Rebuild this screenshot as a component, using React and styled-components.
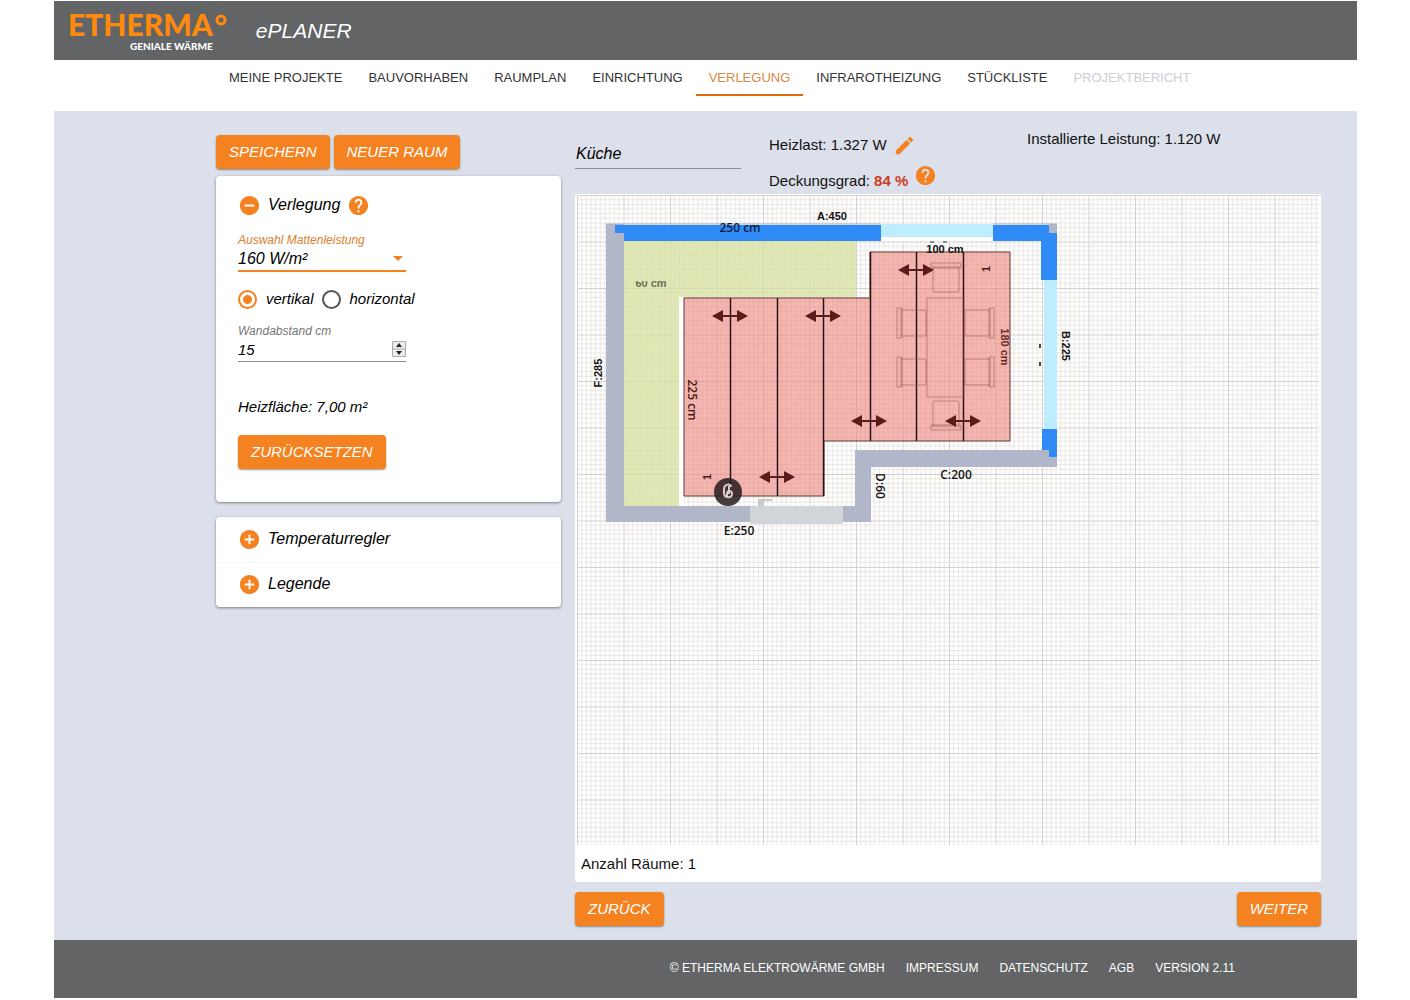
import { useState } from 'react'
import styled, { createGlobalStyle, css } from 'styled-components'
import { MdAddCircle, MdEdit, MdHelp, MdRemoveCircle } from 'react-icons/md'

const orange = '#f58220'
const grey = '#626466'

const GlobalStyle = createGlobalStyle`
  * {
    box-sizing: border-box;
  }
  body {
    margin: 0;
    background: #fff;
    color: #111;
    font-family: 'Liberation Sans', Arial, sans-serif;
    font-size: 15px;
  }
`

const brandFont = css`
  font-family: 'Liberation Sans', Arial, sans-serif;
  font-style: italic;
  font-weight: 400;
`

const Page = styled.div`
  margin: 1px 53px 0 54px;
`

const Header = styled.header`
  display: flex;
  align-items: flex-start;
  gap: 28px;
  height: 59px;
  padding: 8px 14px;
  background: ${grey};
  color: #fff;
`

const Logo = styled.a`
  display: grid;
  grid-template-columns: auto 14px;
  column-gap: 1px;
  color: #ff8a0c;
  text-decoration: none;
  font-family: Lato, sans-serif;
  font-weight: 900;
`

const LogoName = styled.span`
  font-size: 30px;
  line-height: 31px;
`

const LogoRing = styled.svg`
  width: 14px;
  height: 14px;
  margin-top: 4px;
`

const LogoClaim = styled.span`
  color: #fff;
  font-size: 10px;
  line-height: 12px;
  text-align: right;
`

const AppName = styled.h1`
  ${brandFont}
  margin: 10px 0 0;
  font-size: 21px;
  line-height: 24px;
`

const Nav = styled.nav`
  display: flex;
  height: 51px;
  padding: 0 162px;
`

const NavLink = styled.a`
  height: 36px;
  padding: 9px 13px 0;
  border-bottom: 2px solid ${p => p.$active ? '#e06c10' : 'transparent'};
  color: ${p => p.$active ? '#d98a45' : p.$disabled ? '#ccced6' : '#333'};
  font-size: 13px;
  line-height: 18px;
  text-decoration: none;
  white-space: nowrap;
`

const Main = styled.main`
  display: grid;
  grid-template-columns: 345px minmax(0, 1fr);
  gap: 14px;
  padding: 0 36px 14px 162px;
  background: #dce0ea;
`

const Sidebar = styled.aside`
  padding-top: 24px;
`

const ButtonRow = styled.div`
  display: flex;
  justify-content: ${p => p.$spread ? 'space-between' : 'flex-start'};
  gap: 4px;
`

const Button = styled.button`
  ${brandFont}
  height: 34px;
  padding: 0 13px 2px;
  border: 0;
  border-radius: 4px;
  background: ${orange};
  box-shadow: 0 1px 2px rgba(0, 0, 0, .4);
  color: #fff;
  font-size: 15px;
  white-space: nowrap;
  cursor: pointer;
`

const Card = styled.section`
  ${brandFont}
  margin-top: ${p => p.$gap}px;
  border-radius: 4px;
  background: #fff;
  box-shadow: 0 1px 3px rgba(0, 0, 0, .45);
  color: #000;
`

const Settings = styled.div`
  padding: 17px 22px 33px;
`

const PanelTitle = styled.h2`
  display: flex;
  align-items: center;
  gap: 7px;
  margin: 0;
  font-size: 16px;
  font-weight: 400;
  line-height: 24px;
`

const IconButton = styled.button`
  display: flex;
  padding: 0;
  border: 0;
  background: none;
  color: ${orange};
  cursor: pointer;
`

const PanelToggle = styled.button`
  ${brandFont}
  display: flex;
  align-items: center;
  gap: 7px;
  width: 100%;
  height: 45px;
  padding: 0 22px 2px;
  border: 0;
  border-top: 1px solid ${p => p.$divided ? '#f4f4f4' : 'transparent'};
  background: none;
  color: #000;
  font-size: 16px;
  cursor: pointer;
  svg {
    color: ${orange};
  }
`

const Field = styled.div`
  position: relative;
  width: 168px;
  margin-top: ${p => p.$gap}px;
  border-bottom: ${p => p.$active ? `2px solid ${orange}` : '1px solid #8c8c8c'};
`

const FieldLabel = styled.label`
  display: block;
  color: ${p => p.$active ? '#d9802f' : '#777'};
  font-size: 12px;
  line-height: 14px;
`

const inputStyle = css`
  ${brandFont}
  display: block;
  width: 100%;
  height: 23px;
  padding: 0;
  border: 0;
  outline: 0;
  background: none;
  color: #000;
  font-size: 16px;
  appearance: none;
`

const Select = styled.select`
  ${inputStyle}
`

const NumberInput = styled.input`
  ${inputStyle}
  font-size: 15px;
  appearance: textfield;
  &::-webkit-inner-spin-button {
    display: none;
  }
`

const Caret = styled.svg`
  position: absolute;
  right: 3px;
  bottom: 9px;
  width: 10px;
  height: 5px;
  pointer-events: none;
`

const Spinner = styled.svg`
  position: absolute;
  right: 0;
  bottom: 4px;
  width: 14px;
  height: 16px;
`

const RadioRow = styled.div`
  display: flex;
  align-items: center;
  gap: 8px;
  margin-top: 17px;
  font-size: 15px;
  line-height: 20px;
`

const RadioLabel = styled.label`
  display: flex;
  align-items: center;
  gap: 9px;
`

const Radio = styled.input`
  width: 19px;
  height: 19px;
  margin: 0;
  border: 2px solid #555;
  border-radius: 50%;
  appearance: none;
  &:checked {
    border-color: ${orange};
    background: radial-gradient(circle, ${orange} 4px, transparent 5px);
  }
`

const HeatArea = styled.p`
  margin: 35px 0 18px;
  font-size: 15px;
  line-height: 20px;
`

const Workspace = styled.section`
  min-width: 0;
`

const RoomHead = styled.div`
  display: grid;
  grid-template-columns: 166px 230px auto;
  column-gap: 28px;
  height: 83px;
`

const RoomName = styled.input`
  ${inputStyle}
  height: 29px;
  margin-top: 29px;
  padding: 0 1px;
  border-bottom: 1px solid #8a8d94;
`

const Stats = styled.div`
  padding-top: 22px;
`

const Stat = styled.div`
  display: flex;
  align-items: flex-end;
  gap: 6px;
  line-height: 24px;
`

const Coverage = styled(Stat)`
  align-items: flex-start;
  margin-top: 7px;
  line-height: 34px;
`

const Percent = styled.strong`
  color: #cf3a20;
`

const Installed = styled.div`
  padding-top: 16px;
  line-height: 24px;
`

const PlanCard = styled.div`
  padding: 1px 2px 0;
  border-radius: 2px;
  background: #fff;
`

const Plan = styled.svg`
  display: block;
  width: 100%;
  height: 650px;
`

const RoomCount = styled.p`
  margin: 0 0 10px;
  padding: 0 4px;
  line-height: 37px;
`

const Footer = styled.footer`
  display: flex;
  justify-content: flex-end;
  align-items: center;
  gap: 21px;
  height: 58px;
  padding: 0 122px 3px 0;
  background: ${grey};
  color: #fff;
  font-size: 12px;
  a {
    color: #fff;
    text-decoration: none;
  }
`

const PlanText = styled.text`
  font-family: ${p => p.$soft ? "'Open Sans'" : "'Liberation Sans'"}, sans-serif;
  font-size: ${p => p.$soft ? 12 : 11}px;
  font-weight: ${p => p.$soft ? 600 : 700};
  text-anchor: middle;
  dominant-baseline: central;
`

const tabs = [
  { label: 'MEINE PROJEKTE' },
  { label: 'BAUVORHABEN' },
  { label: 'RAUMPLAN' },
  { label: 'EINRICHTUNG' },
  { label: 'VERLEGUNG', active: true },
  { label: 'INFRAROTHEIZUNG' },
  { label: 'STÜCKLISTE' },
  { label: 'PROJEKTBERICHT', disabled: true }
]

const footerLinks = ['IMPRESSUM', 'DATENSCHUTZ', 'AGB']

const arrows = [[153, 121], [246, 121], [200, 282], [339, 75], [292, 226], [386, 226]]

// seat x, seat y, rotation of the chair around its seat
const chairs = [[369, 84, 0], [336, 128, -90], [336, 177, -90], [401, 128, 90], [401, 177, 90], [369, 219, 180]]

const labels = [
  { text: '250 cm', x: 163, y: 32, soft: true, color: '#0b1c3c' },
  { text: 'A:450', x: 255, y: 21 },
  { text: '100 cm', x: 368, y: 54 },
  { text: 'C:200', x: 379, y: 279, soft: true },
  { text: 'E:250', x: 162, y: 335, soft: true },
  { text: 'B:225', x: 489, y: 151, turn: 90 },
  { text: 'D:60', x: 303, y: 291, turn: 90, soft: true },
  { text: 'F:285', x: 21, y: 178, turn: -90 },
  { text: '225 cm', x: 115, y: 205, turn: 90, soft: true, color: '#4a1815' },
  { text: '180 cm', x: 428, y: 152, turn: 90, color: '#6b2a26' },
  { text: '1', x: 130, y: 282, turn: -90, color: '#4a1815' },
  { text: '1', x: 409, y: 74, turn: -90, color: '#4a1815' }
]

function Grid () {
  const lines = [1, 2, 3, 4, 5, 6, 7, 8, 9].map(n => n * 4.65)
  return (
    <>
      <defs>
        <pattern id='grid' width='46.5' height='46.5' patternUnits='userSpaceOnUse'>
          {lines.map(n => <path key={n} d={`M${n} 0V46.5M0 ${n}H46.5`} stroke='#e9e5e2' />)}
          <path d='M.5 0V46.5M0 .5H46.5' stroke='#d4d1d1' />
        </pattern>
      </defs>
      <rect width='100%' height='100%' fill='url(#grid)' />
    </>
  )
}

function Walls () {
  return (
    <>
      <path d='M47 46H279V102H102V311H47Z' fill='#d5df9b' fillOpacity='.72' />
      <path d='M102 102H107V311H102Z' fill='#fff' />
      <path d='M29 29H47V311H278V255H480V272H294V327H29Z' fill='#b1b7c9' />
      <path d='M173 311H266V329H173Z' fill='#d0d5da' />
      <path d='M181 311V304H195V306H187V311Z' fill='#c6cbd0' />
      <path d='M38 30H304V46H47V38H38Z' fill='#2f8af5' />
      <path d='M304 42H416V46H304Z' fill='#fff' />
      <path d='M304 29H416V42H304Z' fill='#bdedff' />
      <path d='M416 30H480V85H464V46H416Z' fill='#2f8af5' />
      <path d='M472 29H480V38H472Z' fill='#b1b7c9' />
      <path d='M467 85H480V234H467Z' fill='#bdedff' />
      <path d='M465 234H480V262H472V255H465Z' fill='#2f8af5' />
      <path d='M29 29H304M416 29H480' stroke='#a3adc2' />
      <path d='M463 149V153M463 167V171' stroke='#444' strokeWidth='2' />
    </>
  )
}

function Mats () {
  return (
    <>
      <path
        d='M107 103H293V57H433V246H247V301H107Z'
        fill='#ee7f76' fillOpacity='.56' stroke='#5e3b3b'
      />
      <path
        d='M153.500 103V301M200.500 103V301M246.500 103V301M293.500 57V246M339.500 57V246M386.500 57V246'
        stroke='#2c1414' strokeWidth='1.500'
      />
      <g fill='none' stroke='#9b5352' strokeOpacity='.55'>
        <rect x='350' y='103' width='37' height='99' />
        {chairs.map(([x, y, turn]) => (
          <g key={`${x}-${y}`} transform={`translate(${x} ${y}) rotate(${turn})`}>
            <rect x='-13' y='-11' width='26' height='24' rx='1' />
            <rect x='-15' y='-16' width='30' height='4' />
            <path d='M-15-11H-12M12-11H15' />
          </g>
        ))}
      </g>
      {arrows.map(([x, y]) => (
        <path
          key={`${x}-${y}`}
          transform={`translate(${x} ${y})`}
          d='M-18 0L-7-6V-1H7V-6L18 0L7 6V1H-7V6Z'
          fill='#5b1b1a'
        />
      ))}
    </>
  )
}

function FloorPlan () {
  return (
    <Plan role='img' aria-label='Raumplan Küche'>
      <Grid />
      <Walls />
      <Mats />
      <clipPath id='lower'>
        <rect x='50' y='86' width='50' height='12' />
      </clipPath>
      <g clipPath='url(#lower)'>
        <PlanText x={74} y={88} fill='#6c7057'>60 cm</PlanText>
      </g>
      {labels.map(l => (
        <PlanText
          key={`${l.text}-${l.x}`}
          $soft={l.soft}
          fill={l.color || '#111'}
          transform={`translate(${l.x} ${l.y}) rotate(${l.turn || 0})`}
        >
          {l.text}
        </PlanText>
      ))}
      <path d='M353 47H357M366 47H370' stroke='#333' />
      <circle cx='151' cy='297' r='14' fill='#2b2022' fillOpacity='.88' />
      <path
        d='M154 292C154 288 147 289 147 294V298C147 303 155 304 155 299C155 295 150 295 150 299V303M152 291V299'
        fill='none' stroke='#d9cccc' strokeWidth='2'
      />
    </Plan>
  )
}

export default function App () {
  const [power, setPower] = useState('160')
  const [direction, setDirection] = useState('vertikal')
  const [distance, setDistance] = useState(15)
  const [name, setName] = useState('Küche')

  return (
    <>
      <GlobalStyle />
      <Page>
        <Header>
          <Logo href='#'>
            <LogoName>ETHERMA</LogoName>
            <LogoRing viewBox='0 0 14 14'>
              <circle cx='7' cy='7' r='4' fill='none' stroke='currentColor' strokeWidth='3' />
            </LogoRing>
            <LogoClaim>GENIALE WÄRME</LogoClaim>
          </Logo>
          <AppName>ePLANER</AppName>
        </Header>
        <Nav>
          {tabs.map(tab => (
            <NavLink
              key={tab.label}
              href='#'
              $active={tab.active}
              $disabled={tab.disabled}
              aria-current={tab.active ? 'page' : undefined}
            >
              {tab.label}
            </NavLink>
          ))}
        </Nav>
        <Main>
          <Sidebar>
            <ButtonRow>
              <Button>SPEICHERN</Button>
              <Button>NEUER RAUM</Button>
            </ButtonRow>
            <Card $gap={7}>
              <Settings>
                <PanelTitle>
                  <IconButton aria-label='Zuklappen'><MdRemoveCircle size={23} /></IconButton>
                  Verlegung
                  <IconButton aria-label='Hilfe'><MdHelp size={23} /></IconButton>
                </PanelTitle>
                <Field $gap={16} $active>
                  <FieldLabel htmlFor='power' $active>Auswahl Mattenleistung</FieldLabel>
                  <Select id='power' value={power} onChange={e => setPower(e.target.value)}>
                    <option value='160'>160 W/m²</option>
                  </Select>
                  <Caret viewBox='0 0 10 5'><path d='M0 0H10L5 5Z' fill={orange} /></Caret>
                </Field>
                <RadioRow>
                  {['vertikal', 'horizontal'].map(d => (
                    <RadioLabel key={d}>
                      <Radio
                        type='radio'
                        name='direction'
                        checked={direction === d}
                        onChange={() => setDirection(d)}
                      />
                      {d}
                    </RadioLabel>
                  ))}
                </RadioRow>
                <Field $gap={15}>
                  <FieldLabel htmlFor='distance'>Wandabstand cm</FieldLabel>
                  <NumberInput
                    id='distance'
                    type='number'
                    value={distance}
                    onChange={e => setDistance(e.target.value)}
                  />
                  <Spinner viewBox='0 0 14 16'>
                    <path d='M.5.5H13.500V15.500H.5ZM.5 8H13.500' fill='#eee' stroke='#aaa' />
                    <path d='M4 6L7 2L10 6ZM4 10L7 14L10 10Z' fill='#222' />
                  </Spinner>
                </Field>
                <HeatArea>Heizfläche: 7,00 m²</HeatArea>
                <Button>ZURÜCKSETZEN</Button>
              </Settings>
            </Card>
            <Card $gap={15}>
              <PanelToggle><MdAddCircle size={23} />Temperaturregler</PanelToggle>
              <PanelToggle $divided><MdAddCircle size={23} />Legende</PanelToggle>
            </Card>
          </Sidebar>
          <Workspace>
            <RoomHead>
              <RoomName aria-label='Raumname' value={name} onChange={e => setName(e.target.value)} />
              <Stats>
                <Stat>
                  Heizlast: 1.327 W
                  <IconButton aria-label='Bearbeiten'><MdEdit size={23} /></IconButton>
                </Stat>
                <Coverage>
                  <span>Deckungsgrad: <Percent>84 %</Percent></span>
                  <IconButton aria-label='Hilfe'><MdHelp size={23} /></IconButton>
                </Coverage>
              </Stats>
              <Installed>Installierte Leistung: 1.120 W</Installed>
            </RoomHead>
            <PlanCard>
              <FloorPlan />
              <RoomCount>Anzahl Räume: 1</RoomCount>
            </PlanCard>
            <ButtonRow $spread>
              <Button>ZURÜCK</Button>
              <Button>WEITER</Button>
            </ButtonRow>
          </Workspace>
        </Main>
        <Footer>
          <span>© ETHERMA ELEKTROWÄRME GMBH</span>
          {footerLinks.map(link => <a key={link} href='#'>{link}</a>)}
          <span>VERSION 2.11</span>
        </Footer>
      </Page>
    </>
  )
}
